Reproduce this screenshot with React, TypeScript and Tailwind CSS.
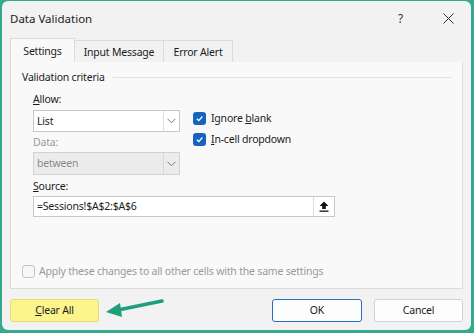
import React, { useState } from 'react';

const font = { fontFamily: '"Noto Sans", "Open Sans", sans-serif' };

const Check = ({ checked }: { checked: boolean }) =>
  checked ? (
    <span className="flex h-[13px] w-[13px] items-center justify-center rounded-[3px] bg-[#1664c0]">
      <svg width="9" height="9" viewBox="0 0 10 10">
        <path d="M2 5.2 L4.2 7.3 L8.2 2.8" fill="none" stroke="white" strokeWidth="1.4" />
      </svg>
    </span>
  ) : (
    <span className="h-[13px] w-[13px] rounded-[3px] border border-[#c4c4c4] bg-[#f7f7f7]" />
  );

const Chevron = () => (
  <svg width="9" height="6" viewBox="0 0 9 6">
    <path d="M0.5 0.8 L4.5 4.8 L8.5 0.8" fill="none" stroke="#777" strokeWidth="1" />
  </svg>
);

export default function App() {
  const [ignore, setIgnore] = useState(true);
  const [dropdown, setDropdown] = useState(true);

  return (
    <div className="h-[333px] w-[474px] overflow-hidden bg-[#35a98c] pb-[3px] pl-[2px] pr-[3px] pt-[1px]" style={font}>
      <div className="flex h-full w-full flex-col rounded-[6px] bg-[#f2f2f2] text-[10.5px] leading-[15px] tracking-[-0.2px] text-[#1b1b1b]">
        {/* title bar */}
        <div className="flex h-[34px] items-center pl-[8px] pr-[17px]">
          <span className="text-[11.5px] tracking-normal">Data Validation</span>
          <span className="ml-auto mr-[40px] text-[12px] text-[#333]">?</span>
          <svg width="11" height="11" viewBox="0 0 11 11">
            <path d="M0.5 0.5 L10.5 10.5 M10.5 0.5 L0.5 10.5" stroke="#333" strokeWidth="1" />
          </svg>
        </div>

        {/* tabs */}
        <div className="ml-[8px] mt-[4px] flex h-[23px] items-end">
          <div className="flex h-[24px] w-[65px] items-center justify-center border border-b-0 border-[#dcdcdc] bg-[#f9f9f9] pt-[2px]">Settings</div>
          <div className="flex h-[22px] w-[89px] items-center justify-center border-r border-t border-[#dcdcdc] pt-[2px]">Input Message</div>
          <div className="flex h-[22px] w-[69px] items-center justify-center border-r border-t border-[#dcdcdc] pt-[2px]">Error Alert</div>
        </div>

        {/* panel */}
        <div className="mx-[8px] flex h-[227px] flex-col border border-t-0 border-[#dcdcdc] bg-[#f9f9f9] pl-[11px] pr-[10px]">
          <div className="mt-[8px] flex items-center gap-[8px]">
            <span>Validation criteria</span>
            <span className="h-px flex-1 bg-[#e2e2e2]" />
          </div>

          <div className="ml-[11px] mt-[7px] flex">
            <div className="flex w-[147px] flex-col">
              <span>
                <u>A</u>llow:
              </span>
              <div className="mt-[3px] flex h-[22px] items-center border border-[#c8c8c8] bg-white">
                <span className="flex-1 pl-[3px]">List</span>
                <span className="flex h-full w-[16px] items-center justify-center border-l border-[#e0e0e0]">
                  <Chevron />
                </span>
              </div>
              <span className="mt-[3px] text-[#9a9a9a]">Data:</span>
              <div className="mt-[2px] flex h-[23px] items-center border border-[#d2d2d2] bg-[#ececec] text-[#8a8a8a]">
                <span className="flex-1 pl-[3px]">between</span>
                <span className="flex h-full w-[16px] items-center justify-center border-l border-[#d8d8d8]">
                  <Chevron />
                </span>
              </div>
            </div>
            <div className="ml-[13px] mt-[19px] flex flex-col gap-[6px]">
              <button className="flex items-center gap-[5px]" onClick={() => setIgnore(!ignore)}>
                <Check checked={ignore} />
                <span>
                  Ignore <u>b</u>lank
                </span>
              </button>
              <button className="flex items-center gap-[5px]" onClick={() => setDropdown(!dropdown)}>
                <Check checked={dropdown} />
                <span>
                  <u>I</u>n-cell dropdown
                </span>
              </button>
            </div>
          </div>

          <div className="ml-[11px] mt-[4px] flex flex-col">
            <span>
              <u>S</u>ource:
            </span>
            <div className="mt-[2px] flex h-[21px] w-[302px] items-center border border-[#c8c8c8] bg-white">
              <span className="flex-1 pl-[3px]">=Sessions!$A$2:$A$6</span>
              <span className="flex h-full w-[21px] items-center justify-center border-l border-[#e0e0e0]">
                <svg width="10" height="11" viewBox="0 0 10 11">
                  <path d="M5 0.5 L9.5 5 L6.8 5 L6.8 8 L3.2 8 L3.2 5 L0.5 5 Z" fill="#111" />
                  <rect x="0.5" y="9.5" width="9" height="1.3" fill="#111" />
                </svg>
              </span>
            </div>
          </div>

          <div className="mb-[9px] mt-auto flex items-center gap-[4px] text-[#9a9a9a]">
            <Check checked={false} />
            <span>Apply these changes to all other cells with the same settings</span>
          </div>
        </div>

        {/* buttons */}
        <div className="mx-[8px] mt-[10px] flex items-center">
          <div className="relative">
            <button className="h-[23px] w-[89px] rounded-[3px] border border-[#e2dc7a] bg-[#fbf58c]">
              <u>C</u>lear All
            </button>
            <svg className="absolute left-[94px] top-[0px]" width="62" height="24" viewBox="0 0 62 24">
              <path d="M58 2 L14 11" stroke="#1f9e7e" strokeWidth="3.5" strokeLinecap="round" />
              <path d="M2 13 L16 4 L18 18 Z" fill="#1f9e7e" />
            </svg>
          </div>
          <button className="ml-auto h-[23px] w-[90px] rounded-[3px] border border-[#2a6fbf] bg-[#fdfdfd]">OK</button>
          <button className="ml-[12px] h-[23px] w-[89px] rounded-[3px] border border-[#d2d2d2] bg-[#fdfdfd]">Cancel</button>
        </div>
      </div>
    </div>
  );
}
